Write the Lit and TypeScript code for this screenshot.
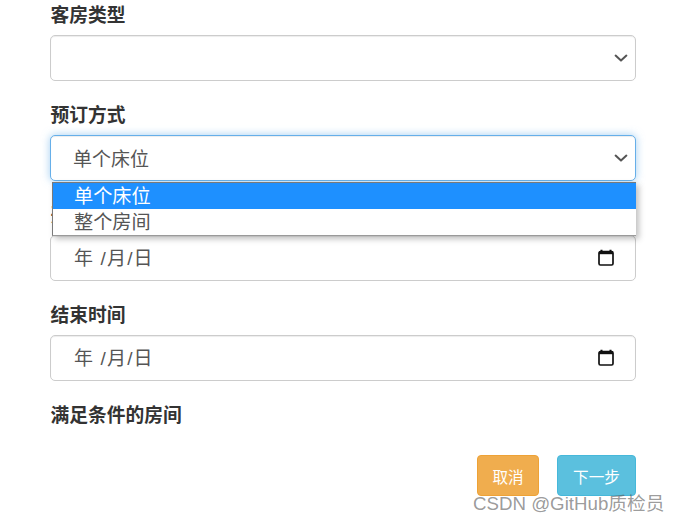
import { LitElement, html, css, svg } from "lit";
import { customElement } from "lit/decorators.js";

const chevron = svg`<svg class="chev" width="14" height="14" viewBox="0 0 14 14"><path d="M1.6 4.6 7 9.6l5.4-5" fill="none" stroke="#555" stroke-width="2" stroke-linecap="round" stroke-linejoin="round"/></svg>`;
const calendar = svg`<svg class="cal" width="16" height="17" viewBox="0 0 16 17"><path d="M3.5 0.8v2M12.5 0.8v2" stroke="#111" stroke-width="2" fill="none"/><rect x="1" y="2.6" width="14" height="13.4" rx="1.4" fill="none" stroke="#111" stroke-width="1.7"/><rect x="1" y="2.6" width="14" height="2.6" fill="#111"/></svg>`;

@customElement("app-root")
export class AppRoot extends LitElement {
  static styles = css`
    :host {
      display: block;
      width: 679px;
      height: 523px;
      overflow: hidden;
      position: relative;
      background: #fff;
      font-family: "Liberation Sans", "Noto Sans CJK SC", sans-serif;
    }
    .form {
      display: flex;
      flex-direction: column;
      padding: 0 43px 0 50px;
    }
    .group {
      display: flex;
      flex-direction: column;
      height: 100px;
      position: relative;
    }
    label {
      display: block;
      height: 35px;
      line-height: 31px;
      padding-left: 0.5px;
      font-size: 18.75px;
      font-weight: 700;
      color: #333;
    }
    .control {
      box-sizing: border-box;
      height: 46px;
      border: 1px solid #ccc;
      border-radius: 5px;
      box-shadow: inset 0 1px 1px rgba(0, 0, 0, 0.075);
      display: flex;
      align-items: center;
      justify-content: space-between;
      padding: 0 7px 2px 22px;
      font-size: 19px;
      color: #555;
      background: #fff;
    }
    .control.date {
      padding: 0 21px 4px 23px;
    }
    .control.focus {
      border-color: #66afe9;
      box-shadow: inset 0 1px 1px rgba(0, 0, 0, 0.075), 0 0 8px rgba(102, 175, 233, 0.6);
    }
    .chev { display: block; flex: none; position: relative; top: 1px; }
    .cal { display: block; flex: none; position: relative; top: 1px; }
    .date-text { letter-spacing: 1.15px; white-space: pre; }
    .dropdown {
      position: absolute;
      left: 52px;
      top: 182px;
      width: 584px;
      box-sizing: border-box;
      border-top: 1px solid #7a7a7a;
      border-left: 1px solid #7a7a7a;
      border-bottom: 1px solid #9a9a9a;
      background: #fff;
      box-shadow: 3px 3px 6px rgba(0, 0, 0, 0.25);
      font-size: 19.2px;
      color: #555;
    }
    .opt {
      height: 26px;
      line-height: 28px;
      padding-left: 21px;
      overflow: hidden;
    }
    .opt.sel { background: #1e90ff; color: #fff; }
    .actions {
      display: flex;
      justify-content: flex-end;
      gap: 18px;
      margin-top: -45px;
    }
    button {
      box-sizing: border-box;
      height: 41px;
      border-radius: 4px;
      color: #fff;
      font: 15.6px "Liberation Sans", "Noto Sans CJK SC", sans-serif;
      padding: 0;
    }
    .cancel { width: 62px; background: #f0ad4e; border: 1px solid #eea236; }
    .next { width: 79px; background: #5bc0de; border: 1px solid #46b8da; }
    .watermark {
      position: absolute;
      left: 473px;
      top: 492px;
      font-size: 18.7px;
      line-height: 24px;
      color: rgba(90, 90, 90, 0.62);
      white-space: nowrap;
    }
  `;

  render() {
    return html`
      <div class="form">
        <div class="group">
          <label>客房类型</label>
          <div class="control"><span></span>${chevron}</div>
        </div>
        <div class="group">
          <label>预订方式</label>
          <div class="control focus"><span>单个床位</span>${chevron}</div>
        </div>
        <div class="group">
          <label>开始时间</label>
          <div class="control date"><span class="date-text">年 /月/日</span>${calendar}</div>
        </div>
        <div class="group">
          <label>结束时间</label>
          <div class="control date"><span class="date-text">年 /月/日</span>${calendar}</div>
        </div>
        <div class="group">
          <label>满足条件的房间</label>
        </div>
        <div class="actions">
          <button class="cancel">取消</button>
          <button class="next">下一步</button>
        </div>
      </div>
      <div class="dropdown">
        <div class="opt sel">单个床位</div>
        <div class="opt">整个房间</div>
      </div>
      <div class="watermark">CSDN @GitHub质检员</div>
    `;
  }
}
